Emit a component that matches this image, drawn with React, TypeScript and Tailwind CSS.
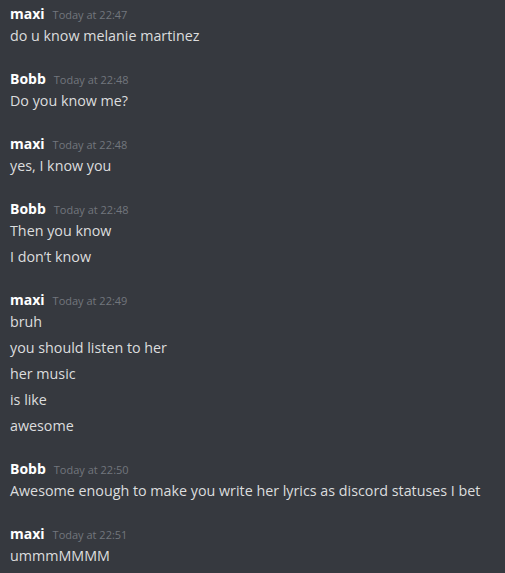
import React from 'react';

interface Group {
  author: string;
  time: string;
  lines: string[];
}

const groups: Group[] = [
  { author: 'maxi', time: 'Today at 22:47', lines: ['do u know melanie martinez'] },
  { author: 'Bobb', time: 'Today at 22:48', lines: ['Do you know me?'] },
  { author: 'maxi', time: 'Today at 22:48', lines: ['yes, I know you'] },
  { author: 'Bobb', time: 'Today at 22:48', lines: ['Then you know', 'I don\u2019t know'] },
  {
    author: 'maxi',
    time: 'Today at 22:49',
    lines: ['bruh', 'you should listen to her', 'her music', 'is like', 'awesome'],
  },
  {
    author: 'Bobb',
    time: 'Today at 22:50',
    lines: ['Awesome enough to make you write her lyrics as discord statuses I bet'],
  },
  { author: 'maxi', time: 'Today at 22:51', lines: ['ummmMMMM'] },
];

export default function App() {
  return (
    <div
      className="w-[505px] h-[573px] overflow-hidden bg-[#36393f] pt-[4px] px-[10px] flex flex-col gap-[20px]"
      style={{ fontFamily: '"Open Sans", "Noto Sans", sans-serif' }}
    >
      {groups.map((g, i) => (
        <div key={i} className="flex flex-col">
          {/* Header */}
          <div className="flex items-baseline h-[19px]">
            <span className="text-[14px] font-bold text-white leading-[19px]">{g.author}</span>
            <span className="ml-[8px] text-[11px] text-[#72767d] leading-[19px]">{g.time}</span>
          </div>
          {/* Messages */}
          {g.lines.map((line, j) => (
            <div key={j} className="text-[14.3px] leading-[26px] text-[#dcddde] whitespace-nowrap">
              {line}
            </div>
          ))}
        </div>
      ))}
    </div>
  );
}
